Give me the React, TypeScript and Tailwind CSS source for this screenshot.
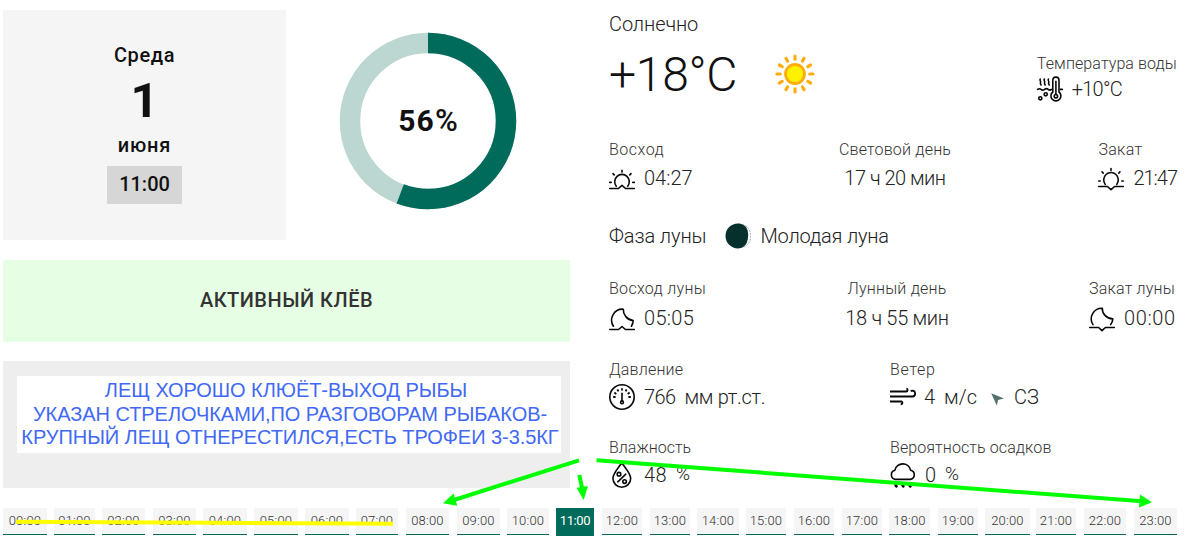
import { ReactNode } from 'react';

type IconProps = { children: ReactNode };

const Icon = ({ children }: IconProps) => (
	<svg
		viewBox="0 0 26 26"
		className="size-[26px] shrink-0 overflow-visible"
		fill="none"
		stroke="#080808"
		strokeWidth="1.6"
		strokeLinecap="round"
		strokeLinejoin="round"
	>
		{children}
	</svg>
);

const SunriseIcon = () => (
	<Icon>
		<path d="M.7 23.5H9.4L13 20.3L16.6 23.5H25.3" />
		<path d="M7.3 21.2a7.3 7.3 0 1 1 11.4 0" />
		<path d="M13 5.4v1.7M4 8.6l1.2 1.3M22 8.6l-1.2 1.3M.7 17.4h1.5M23.8 17.4h1.5" />
	</Icon>
);

const SunsetIcon = () => (
	<Icon>
		<path d="M.7 21.5H9.4L13 24.7L16.6 21.5H25.3" />
		<path d="M7.3 19.4a7.3 7.3 0 1 1 11.4 0" />
		<path d="M13 3.6v1.9M4 6.8l1.2 1.3M22 6.8l-1.2 1.3M.7 16h1.5M23.8 16h1.5" />
	</Icon>
);

const MoonriseIcon = () => (
	<Icon>
		<path d="M.7 24.5H9.6L13 21.5L16.4 24.5H25.3" />
		<path d="M4.4 21.2A11 11 0 0 1 14.3 4.2C14 9.6 18 14.8 24.2 15.6A10.5 10.5 0 0 1 22.4 21.2" />
	</Icon>
);

const MoonsetIcon = () => (
	<Icon>
		<path d="M.7 22.5H9.6L13 25.6L16.4 22.5H25.3" />
		<path d="M4 19.6A10.6 10.6 0 0 1 13.3 3.2C13 8.4 17.2 13.6 23.8 13.9A10 10 0 0 1 21.7 19.6" />
	</Icon>
);

const PressureIcon = () => (
	<Icon>
		<circle cx="13" cy="13" r="12.2" />
		<path d="M13 9.4v7.2" />
		<circle cx="13" cy="18.3" r="1.4" />
		<path
			d="M13 4.2v2.4M8.4 5.4l1 2M17.6 5.4l-1 2M5.4 8.6l1.9 1.3M20.6 8.6l-1.9 1.3M4.2 13h2.4M19.4 13h2.4"
			strokeWidth="1.8"
			strokeLinecap="butt"
		/>
	</Icon>
);

const WindIcon = () => (
	<Icon>
		<g strokeWidth="1.8" strokeLinecap="butt">
			<path d="M0 7.5H16.2c1.8 0 1.9-2.6.2-2.9" />
			<path d="M0 12.5H22.4c3.6-.1 3.7-5.6 0-5.9-.7 0-1.2.2-1.7.6" />
			<path d="M0 17.5H11.2c1.8.1 1.7 2.8-.5 2.9" />
		</g>
	</Icon>
);

const HumidityIcon = () => (
	<Icon>
		<path d="M12.8.8C10 5 3.9 11.6 3.9 16.3a8.9 8.9 0 0 0 17.8 0C21.7 11.6 15.6 5 12.8.8Z" />
		<path d="M8.8 19.8 16.8 12.2" />
		<circle cx="10" cy="12.2" r="1.8" />
		<circle cx="15.6" cy="19.6" r="1.8" />
	</Icon>
);

const RainIcon = () => (
	<Icon>
		<path d="M5.4 17.4a4.7 4.7 0 0 1-.5-9.2C5.5 4.3 9 1.9 12.7 1.9c3.8 0 7.2 2.5 7.9 6.3a4.7 4.7 0 0 1-.1 9.2Z" />
		<path d="M5.7 23.2l.7 1.2M12.6 23.2l.7 1.2M19.6 23.2l.7 1.2" strokeWidth="2.8" />
	</Icon>
);

const WaterTempIcon = () => (
	<Icon>
		<path d="M15.8 16V4.2a3 3 0 0 1 6.2 0V16a5 5 0 1 1-6.2 0Z" />
		<path d="M18.9 5.2V18" />
		<circle cx="18.9" cy="20.2" r="1.7" />
		<path d="M.6 13.4c1.4-1 2.2-1 3.4 0s2.4 1 3.6 0 2.4-1 3.6 0 2.4.7 3.3 0M23.3 13.4h2" />
		<path d="M3.3 3c-1.2 1.5.9 2.2.2 3.7-.4 1 .1 1.7.6 2.3M7.4 3c-1.2 1.5.9 2.2.2 3.7-.4 1 .1 1.7.6 2.3M11.5 3c-1.2 1.5.9 2.2.2 3.7-.4 1 .1 1.7.6 2.3" />
		<circle cx="3.3" cy="22.3" r="1.6" />
		<circle cx="8.7" cy="18.3" r="1.6" />
	</Icon>
);

const SunIcon = () => (
	<svg viewBox="0 0 40 40" className="size-10 shrink-0 mb-0.5 -mr-px ml-px">
		<circle cx="20" cy="20" r="9.5" fill="#fff200" stroke="#ffad0d" strokeWidth="2.8" />
		{[0, 30, 60, 90, 120, 150, 180, 210, 240, 270, 300, 330].map((angle) => (
			<path
				key={angle}
				d="M20 2V5.2"
				stroke="#ffad0d"
				strokeWidth="3.2"
				strokeLinecap="round"
				transform={`rotate(${angle} 20 20)`}
			/>
		))}
	</svg>
);

const MoonPhaseIcon = () => (
	<svg viewBox="0 0 26 26" className="size-[26px] shrink-0">
		<path d="M13 .4c4.6 0 8.3 2.5 9.5 6.6 1.1 4 .8 8.4-.5 12-1.4 3.9-4.9 6.4-9 6.4A12.5 12.5 0 0 1 13 .4Z" fill="#06302c" />
		<path d="M17.5 1.3a12.4 12.4 0 0 1 0 23.4" fill="none" stroke="#7f9693" strokeWidth=".8" strokeDasharray="2 1" />
	</svg>
);

type MetricProps = {
	title: string;
	titleClass?: string;
	icon?: ReactNode;
	valueHeight?: string;
	align?: string;
	children: ReactNode;
};

const Metric = ({ title, titleClass = '', icon, valueHeight = 'h-[34px]', align = '', children }: MetricProps) => (
	<div className={`flex flex-col whitespace-nowrap ${align}`}>
		<p className={`h-6 text-base/6 text-[#333] ${titleClass}`}>{title}</p>
		<div className={`flex items-center gap-[9px] text-xl ${valueHeight}`}>
			{icon}
			{children}
		</div>
	</div>
);

const hours = [
	{ time: '00:00', size: 'w-[44px] mr-[7px]' },
	{ time: '01:00', size: 'w-[41px] mr-[7px]' },
	{ time: '02:00', size: 'w-[43px] mr-[8px]' },
	{ time: '03:00', size: 'w-[43px] mr-[7px]' },
	{ time: '04:00', size: 'w-[44px] mr-[7px]' },
	{ time: '05:00', size: 'w-[44px] mr-[7px]' },
	{ time: '06:00', size: 'w-[44px] mr-[7px]' },
	{ time: '07:00', size: 'w-[42px] mr-[8px]' },
	{ time: '08:00', size: 'w-[43px] mr-[8px]' },
	{ time: '09:00', size: 'w-[43px] mr-[7px]' },
	{ time: '10:00', size: 'w-[42px] mr-[7px]' },
	{ time: '11:00', size: 'w-[38px] mr-[8px]' },
	{ time: '12:00', size: 'w-[40px] mr-[8px]' },
	{ time: '13:00', size: 'w-[40px] mr-[7px]' },
	{ time: '14:00', size: 'w-[42px] mr-[7px]' },
	{ time: '15:00', size: 'w-[40px] mr-[8px]' },
	{ time: '16:00', size: 'w-[40px] mr-[8px]' },
	{ time: '17:00', size: 'w-[40px] mr-[7px]' },
	{ time: '18:00', size: 'w-[41px] mr-[8px]' },
	{ time: '19:00', size: 'w-[40px] mr-[7px]' },
	{ time: '20:00', size: 'w-[45px] mr-[6px]' },
	{ time: '21:00', size: 'w-[40px] mr-[8px]' },
	{ time: '22:00', size: 'w-[42px] mr-[8px]' },
	{ time: '23:00', size: 'w-[43px]' },
];

const activeHour = '11:00';

const DateCard = () => (
	<div className="w-[283px] h-[230px] bg-[#f5f5f5] flex flex-col items-center text-[#111] font-medium text-xl/6">
		<p className="mt-[33px] tracking-[.6px]">Среда</p>
		<p className="h-[66px] text-[49px]/[68px] font-bold">1</p>
		<p className="tracking-[.8px]">июня</p>
		<p className="mt-[9px] w-[75px] h-[38px] bg-[#d6d6d6] text-center leading-[36px]">11:00</p>
	</div>
);

// pathLength 100 lets the dash be written as a percentage
const BiteChart = () => (
	<div className="flex-1 h-[222px] grid place-items-center *:col-start-1 *:row-start-1">
		<svg viewBox="0 0 178 178" className="size-[178px]" fill="none" strokeWidth="20.5">
			<circle cx="89" cy="89" r="78" stroke="#bcd6d1" />
			<circle cx="89" cy="89" r="78" stroke="#016b5b" pathLength={100} strokeDasharray="55.8 44.2" transform="rotate(-90 89 89)" />
		</svg>
		<p className="text-[30px] text-[#111] font-bold tracking-[1.2px]">
			56<span className="font-medium tracking-normal text-[31px]">%</span>
		</p>
	</div>
);

const Forecast = () => (
	<div className="w-[568px] flex flex-col">
		<p className="mt-3 h-6 text-xl/6 tracking-[-.1px]">Солнечно</p>
		<div className="mt-1.5 h-[66px] flex items-center">
			<p className="text-5xl text-[#111] w-[165px] whitespace-nowrap tracking-[-.3px]">+18°C</p>
			<SunIcon />
			<div className="ml-auto mt-1">
				<Metric title="Температура воды" titleClass="tracking-[.1px]" icon={<WaterTempIcon />} valueHeight="h-[27px]">
					<span className="tracking-[-.8px]">+10°C</span>
				</Metric>
			</div>
		</div>
		<div className="mt-[30px] grid grid-cols-[1fr_auto_1fr]">
			<Metric title="Восход" titleClass="tracking-[.5px]" icon={<SunriseIcon />} valueHeight="h-8">
				04:27
			</Metric>
			<Metric title="Световой день" titleClass="tracking-[.2px]" align="items-center ml-1" valueHeight="h-8">
				<span className="tracking-[-.5px]">17 ч 20 мин</span>
			</Metric>
			<div className="flex justify-end">
				<Metric title="Закат" titleClass="tracking-[.3px]" icon={<SunsetIcon />} valueHeight="h-8">
					<span className="tracking-[-1px]">21:47</span>
				</Metric>
			</div>
		</div>
		<div className="mt-[26px] h-8 flex items-center text-xl">
			<span className="tracking-[-.1px]">Фаза луны</span>
			<span className="ml-[19px] mr-[9px]">
				<MoonPhaseIcon />
			</span>
			<span className="tracking-[-.2px]">Молодая луна</span>
		</div>
		<div className="mt-[25px] grid grid-cols-[1fr_auto_1fr]">
			<Metric title="Восход луны" titleClass="tracking-[.3px]" icon={<MoonriseIcon />}>
				<span className="tracking-[.3px]">05:05</span>
			</Metric>
			<Metric title="Лунный день" titleClass="tracking-[.2px]" align="items-center ml-2">
				<span className="tracking-[-.3px]">18 ч 55 мин</span>
			</Metric>
			<div className="flex justify-end">
				<Metric title="Закат луны" titleClass="tracking-[.2px]" align="mr-0.5" icon={<MoonsetIcon />}>
					<span className="tracking-[.6px] -mr-0.5">00:00</span>
				</Metric>
			</div>
		</div>
		<div className="mt-[23px] grid grid-cols-[281px_1fr] gap-y-[24px]">
			<Metric title="Давление" titleClass="tracking-[.2px]" icon={<PressureIcon />} valueHeight="h-[30px]">
				<span className="tracking-[-.6px]">766</span>
				<span className="tracking-[-.3px]">мм рт.ст.</span>
			</Metric>
			<Metric title="Ветер" titleClass="tracking-[.7px]" icon={<WindIcon />} valueHeight="h-[30px]">
				<span className="-ml-px">4</span>
				<span>м/с</span>
				<svg viewBox="0 0 13 13" className="size-[13px] ml-[5px] mt-1">
					<path d="M.2.3 13 5.6 7 7 5.9 12.7Z" fill="#54716d" />
				</svg>
				<span className="ml-px">СЗ</span>
			</Metric>
			<Metric title="Влажность" icon={<HumidityIcon />} valueHeight="h-[29px]">
				<span className="tracking-[.4px]">48</span>
				<span className="text-[19px]">%</span>
			</Metric>
			<Metric title="Вероятность осадков" titleClass="tracking-[.1px]" icon={<RainIcon />} valueHeight="h-[29px]">
				<span>0</span>
				<span className="text-[19px]">%</span>
			</Metric>
		</div>
	</div>
);

// marker strokes drawn by hand over the hours strip
const Annotations = () => (
	<svg viewBox="0 0 1200 540" className="absolute inset-0 w-full h-full pointer-events-none">
		<path d="M16 521.7 393 523.8" stroke="#ff0" strokeWidth="4" />
		<g stroke="#0f0" strokeWidth="4">
			<path d="M579 460.3 454 500" />
			<path d="M579.3 475 582.3 489" />
			<path d="M596.5 460.3 1142 501.2" />
		</g>
		<g fill="#0f0">
			<path d="M443 503.3 453.5 493.5 457.3 505.7Z" />
			<path d="M583.7 500 576.5 487.8 588 486Z" />
			<path d="M1152 502.3 1140 494.5 1139 507.5Z" />
		</g>
	</svg>
);

const App = () => {
	return (
		<div className="relative w-[1200px] h-[540px] overflow-hidden bg-white pl-[3px] font-['Roboto','Noto_Sans',sans-serif] font-light text-[#222]">
			<main className="flex gap-[39px] h-[508px]">
				<section className="w-[567px] pt-[10px]">
					<div className="flex">
						<DateCard />
						<BiteChart />
					</div>
					<div className="mt-5 h-[82px] bg-[#e6ffe4] grid place-items-center">
						<h2 className="text-xl font-medium tracking-[.5px] text-[#333] pb-0.5">АКТИВНЫЙ КЛЁВ</h2>
					</div>
					<div className="mt-[19px] h-[127px] bg-[#eee] pt-[15px] pl-[14px]">
						<div className="w-[544px] h-[77px] bg-white pt-[3px] text-center whitespace-nowrap font-['Liberation_Sans',sans-serif] font-normal text-[20px]/[23.5px] tracking-[-.06px] text-[#4169f5]">
							<p className="pr-1.5">ЛЕЩ ХОРОШО КЛЮЁТ-ВЫХОД РЫБЫ</p>
							<p className="pl-0.5">УКАЗАН СТРЕЛОЧКАМИ,ПО РАЗГОВОРАМ РЫБАКОВ-</p>
							<p className="pl-0.5">КРУПНЫЙ ЛЕЩ ОТНЕРЕСТИЛСЯ,ЕСТЬ ТРОФЕИ 3-3.5КГ</p>
						</div>
					</div>
				</section>
				<Forecast />
			</main>

			<nav className="flex text-[13px]/[25px] text-center tracking-[.2px]">
				{hours.map(({ time, size }) => (
					<span
						key={time}
						className={`shrink-0 border-b border-[#016b5b] ${size} ${
							time === activeHour ? 'h-7 bg-[#016b5b] text-white font-normal tracking-[-.4px]' : 'h-[27px] bg-[#f5f5f5] text-[#333]'
						}`}
					>
						{time}
					</span>
				))}
			</nav>

			<Annotations />
		</div>
	);
};

export default App;
